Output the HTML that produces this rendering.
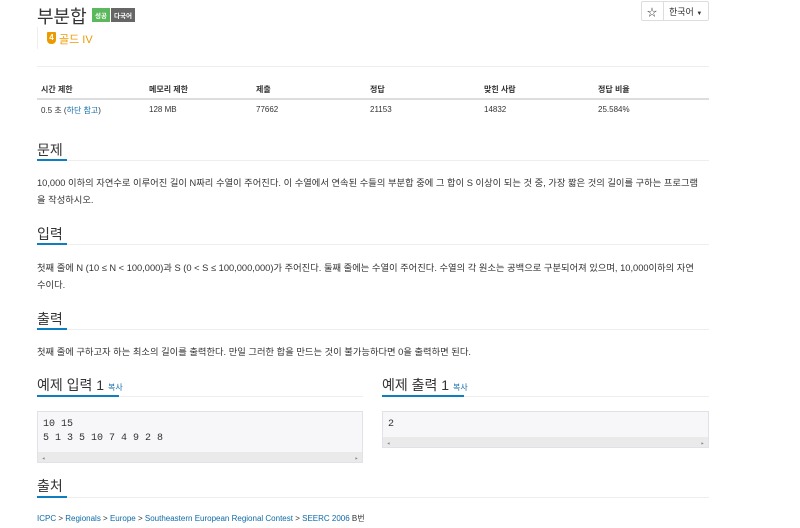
<!DOCTYPE html>
<html><head><meta charset="utf-8"><style>
*{margin:0;padding:0;box-sizing:border-box}
body{width:800px;height:528px;overflow:hidden;background:#fff;font-family:"Liberation Sans","Noto Sans CJK KR",sans-serif;color:#333;position:relative}
.a{position:absolute;white-space:nowrap}
.h{font-size:14px;color:#333}
.ul{position:absolute;height:1px;background:#eee}
.bl{position:absolute;height:2px;background:#0d7ec0}
.p{font-size:9.3px;color:#333;line-height:17px}
a{color:#0d6aa8;text-decoration:none}
.th{font-size:8px;font-weight:bold}
.td{font-size:8px}
.pre{position:absolute;background:#f7f7f9;border:1px solid #e1e1e8;font-family:"Liberation Mono",monospace;font-size:10px;line-height:14px;padding:6px 5px;color:#333}
.sb{position:absolute;left:0;right:0;bottom:0;height:10px;background:#eaeaea;font-size:6px;color:#888}
</style></head><body>
<div class="a" style="left:37px;top:3px;font-size:18px;color:#333">부분합</div>
<div class="a" style="left:92px;top:8px;background:#5cb85c;color:#fff;font-size:6.5px;padding:2px 3px;font-weight:bold">성공</div>
<div class="a" style="left:111px;top:8px;background:#666;color:#fff;font-size:6.5px;padding:2px 3px;font-weight:bold">다국어</div>
<div class="a" style="left:37px;top:27px;width:1px;height:22px;background:#eee"></div>
<div class="a" style="left:47px;top:32px;width:9px;height:12px;background:#ec9a00;border-radius:1px 1px 4px 4px;color:#fff;font-size:8px;text-align:center;font-weight:bold;line-height:12px">4</div>
<div class="a" style="left:59px;top:31px;font-size:11px;color:#ec9a00">골드 IV</div>
<div class="a" style="left:641px;top:1px;width:68px;height:20px;border:1px solid #ddd;border-radius:2px"></div>
<div class="a" style="left:663px;top:1px;width:1px;height:20px;background:#ddd"></div>
<div class="a" style="left:647px;top:4px;font-size:10px">☆</div>
<div class="a" style="left:669px;top:5px;font-size:9px">한국어 <span style="font-size:6px">▼</span></div>
<div class="ul" style="left:37px;top:66px;width:672px"></div>
<div class="a th" style="left:41px;top:84px">시간 제한</div>
<div class="a th" style="left:149px;top:84px">메모리 제한</div>
<div class="a th" style="left:256px;top:84px">제출</div>
<div class="a th" style="left:370px;top:84px">정답</div>
<div class="a th" style="left:484px;top:84px">맞힌 사람</div>
<div class="a th" style="left:598px;top:84px">정답 비율</div>
<div class="a" style="left:37px;top:98px;width:672px;height:2px;background:#ddd"></div>
<div class="a td" style="left:41px;top:105px">0.5 초 (<a>하단 참고</a>)</div>
<div class="a td" style="left:149px;top:105px">128 MB</div>
<div class="a td" style="left:256px;top:105px">77662</div>
<div class="a td" style="left:370px;top:105px">21153</div>
<div class="a td" style="left:484px;top:105px">14832</div>
<div class="a td" style="left:598px;top:105px">25.584%</div>

<div class="a h" style="left:37px;top:140px">문제</div>
<div class="ul" style="left:37px;top:160px;width:672px"></div><div class="bl" style="left:37px;top:159px;width:30px"></div>
<div class="a p" style="left:37px;top:175px">10,000 이하의 자연수로 이루어진 길이 N짜리 수열이 주어진다. 이 수열에서 연속된 수들의 부분합 중에 그 합이 S 이상이 되는 것 중, 가장 짧은 것의 길이를 구하는 프로그램<br>을 작성하시오.</div>

<div class="a h" style="left:37px;top:224px">입력</div>
<div class="ul" style="left:37px;top:244px;width:672px"></div><div class="bl" style="left:37px;top:243px;width:30px"></div>
<div class="a p" style="left:37px;top:260px">첫째 줄에 N (10 ≤ N &lt; 100,000)과 S (0 &lt; S ≤ 100,000,000)가 주어진다. 둘째 줄에는 수열이 주어진다. 수열의 각 원소는 공백으로 구분되어져 있으며, 10,000이하의 자연<br>수이다.</div>

<div class="a h" style="left:37px;top:309px">출력</div>
<div class="ul" style="left:37px;top:329px;width:672px"></div><div class="bl" style="left:37px;top:328px;width:30px"></div>
<div class="a p" style="left:37px;top:344px">첫째 줄에 구하고자 하는 최소의 길이를 출력한다. 만일 그러한 합을 만드는 것이 불가능하다면 0을 출력하면 된다.</div>

<div class="a h" style="left:37px;top:375px">예제 입력 1 <a style="font-size:8px">복사</a></div>
<div class="ul" style="left:37px;top:396px;width:326px"></div><div class="bl" style="left:37px;top:395px;width:82px"></div>
<div class="a h" style="left:382px;top:375px">예제 출력 1 <a style="font-size:8px">복사</a></div>
<div class="ul" style="left:382px;top:396px;width:327px"></div><div class="bl" style="left:382px;top:395px;width:82px"></div>
<div class="pre" style="left:37px;top:411px;width:326px;height:52px">10 15<br>5 1 3 5 10 7 4 9 2 8<div class="sb">&nbsp;◂<span style="float:right">▸&nbsp;</span></div></div>
<div class="pre" style="left:382px;top:411px;width:327px;height:37px">2<div class="sb">&nbsp;◂<span style="float:right">▸&nbsp;</span></div></div>

<div class="a h" style="left:37px;top:476px">출처</div>
<div class="ul" style="left:37px;top:497px;width:672px"></div><div class="bl" style="left:37px;top:496px;width:30px"></div>
<div class="a" style="left:37px;top:513px;font-size:8px"><a>ICPC</a> &gt; <a>Regionals</a> &gt; <a>Europe</a> &gt; <a>Southeastern European Regional Contest</a> &gt; <a>SEERC 2006</a> B번</div>
</body></html>
